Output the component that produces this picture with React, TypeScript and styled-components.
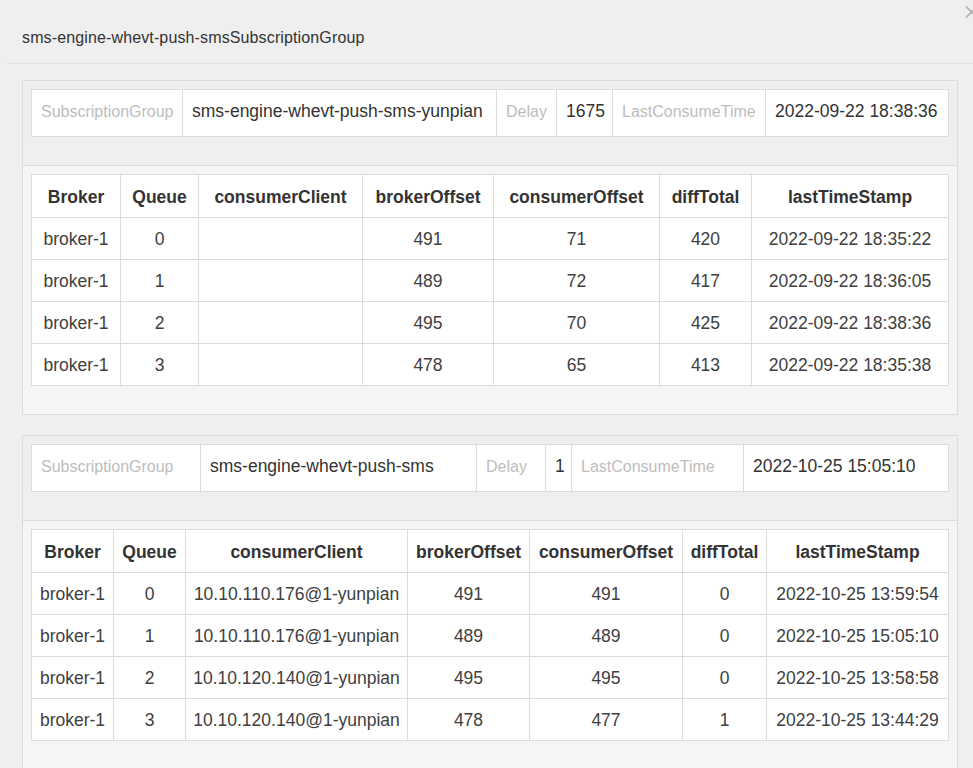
import React from "react";
import styled, { createGlobalStyle } from "styled-components";

const GlobalStyle = createGlobalStyle`
  html, body {
    margin: 0;
    padding: 0;
    background: #efefef;
    overflow: hidden;
  }
  body {
    font-family: "Liberation Sans", Arial, Helvetica, sans-serif;
    color: #333;
  }
`;

const Modal = styled.div`
  position: relative;
  width: 973px;
  height: 768px;
  padding-left: 7px;
  box-sizing: border-box;
  overflow: hidden;
`;

const Header = styled.div`
  height: 63px;
  border-bottom: 1px solid #e2e2e2;
  box-sizing: content-box;
  display: flex;
  align-items: flex-start;
  padding-left: 15px;
`;

const Title = styled.h4`
  margin: 28px 0 0;
  font-size: 16px;
  font-weight: normal;
  line-height: 20px;
  color: #333;
  letter-spacing: 0.13px;
`;

const Close = styled.button`
  position: absolute;
  top: 5px;
  left: 964px;
  width: 16px;
  height: 14px;
  padding: 0;
  border: none;
  background: none;
  color: #b0b0b0;
  cursor: pointer;
`;

const Body = styled.div`
  padding: 16px 15px 0 15px;
  display: flex;
  flex-direction: column;
  gap: 20px;
`;

const Panel = styled.section`
  border: 1px solid #dcdcdc;
  display: flex;
  flex-direction: column;
`;

const PanelHeading = styled.div`
  padding: 8px 8px 28px;
`;

const PanelBody = styled.div`
  border-top: 1px solid #dcdcdc;
  background: #f5f5f5;
  padding: 8px 8px 28px;
`;

const Table = styled.table`
  width: 100%;
  border-collapse: collapse;
  table-layout: fixed;
  background: #fff;
`;

const InfoCell = styled.td<{ $label?: boolean }>`
  border: 1px solid #dcdcdc;
  height: 43px;
  padding: 0 9px 3px;
  text-align: left;
  white-space: nowrap;
  overflow: hidden;
  font-size: ${(p) => (p.$label ? "16px" : "17.5px")};
  color: ${(p) => (p.$label ? "#bdbdbd" : "#333")};
`;

const Th = styled.th`
  border: 1px solid #dcdcdc;
  height: 40px;
  padding: 2px 0 0;
  text-align: center;
  font-size: 17.5px;
  font-weight: bold;
  color: #333;
  white-space: nowrap;
`;

const Td = styled.td`
  border: 1px solid #dcdcdc;
  height: 40px;
  padding: 1px 0 0;
  text-align: center;
  font-size: 17.5px;
  color: #404040;
  white-space: nowrap;
`;

type Row = [string, string, string, string, string, string, string];

interface Group {
  name: string;
  delay: string;
  lastConsume: string;
  infoWidths: number[];
  colWidths: number[];
  rows: Row[];
}

const headers = [
  "Broker",
  "Queue",
  "consumerClient",
  "brokerOffset",
  "consumerOffset",
  "diffTotal",
  "lastTimeStamp",
];

const groups: Group[] = [
  {
    name: "sms-engine-whevt-push-sms-yunpian",
    delay: "1675",
    lastConsume: "2022-09-22 18:38:36",
    infoWidths: [151, 314, 60, 56, 153, 183],
    colWidths: [89, 78, 164, 131, 166, 92, 197],
    rows: [
      ["broker-1", "0", "", "491", "71", "420", "2022-09-22 18:35:22"],
      ["broker-1", "1", "", "489", "72", "417", "2022-09-22 18:36:05"],
      ["broker-1", "2", "", "495", "70", "425", "2022-09-22 18:38:36"],
      ["broker-1", "3", "", "478", "65", "413", "2022-09-22 18:35:38"],
    ],
  },
  {
    name: "sms-engine-whevt-push-sms",
    delay: "1",
    lastConsume: "2022-10-25 15:05:10",
    infoWidths: [169, 276, 69, 26, 172, 205],
    colWidths: [82, 72, 222, 122, 153, 84, 182],
    rows: [
      ["broker-1", "0", "10.10.110.176@1-yunpian", "491", "491", "0", "2022-10-25 13:59:54"],
      ["broker-1", "1", "10.10.110.176@1-yunpian", "489", "489", "0", "2022-10-25 15:05:10"],
      ["broker-1", "2", "10.10.120.140@1-yunpian", "495", "495", "0", "2022-10-25 13:58:58"],
      ["broker-1", "3", "10.10.120.140@1-yunpian", "478", "477", "1", "2022-10-25 13:44:29"],
    ],
  },
];

const GroupPanel: React.FC<{ g: Group }> = ({ g }) => (
  <Panel>
    <PanelHeading>
      <Table>
        <colgroup>
          {g.infoWidths.map((w, i) => (
            <col key={i} style={{ width: w }} />
          ))}
        </colgroup>
        <tbody>
          <tr>
            <InfoCell $label>SubscriptionGroup</InfoCell>
            <InfoCell>{g.name}</InfoCell>
            <InfoCell $label>Delay</InfoCell>
            <InfoCell>{g.delay}</InfoCell>
            <InfoCell $label>LastConsumeTime</InfoCell>
            <InfoCell>{g.lastConsume}</InfoCell>
          </tr>
        </tbody>
      </Table>
    </PanelHeading>
    <PanelBody>
      <Table>
        <colgroup>
          {g.colWidths.map((w, i) => (
            <col key={i} style={{ width: w }} />
          ))}
        </colgroup>
        <thead>
          <tr>
            {headers.map((h) => (
              <Th key={h}>{h}</Th>
            ))}
          </tr>
        </thead>
        <tbody>
          {g.rows.map((r, i) => (
            <tr key={i}>
              {r.map((c, j) => (
                <Td key={j}>{c}</Td>
              ))}
            </tr>
          ))}
        </tbody>
      </Table>
    </PanelBody>
  </Panel>
);

export default function App() {
  return (
    <>
      <GlobalStyle />
      <Modal>
        <Header>
          <Title>sms-engine-whevt-push-smsSubscriptionGroup</Title>
        </Header>
        <Close aria-label="close">
          <svg width="16" height="14" viewBox="0 0 16 14">
            <path d="M2 1.5 L13 12.5 M13 1.5 L2 12.5" stroke="currentColor" strokeWidth="1.6" fill="none" />
          </svg>
        </Close>
        <Body>
          {groups.map((g) => (
            <GroupPanel key={g.name} g={g} />
          ))}
        </Body>
      </Modal>
    </>
  );
}
